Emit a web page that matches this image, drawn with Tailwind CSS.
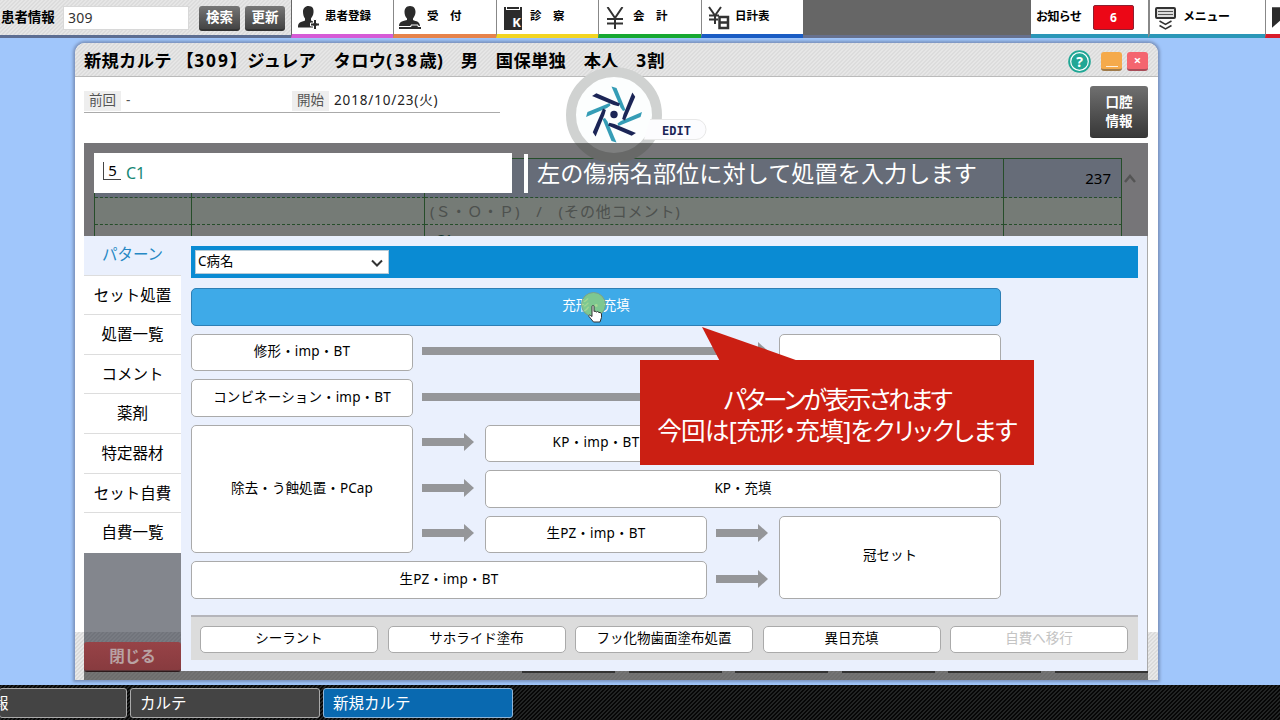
<!DOCTYPE html>
<html lang="ja">
<head>
  <meta charset="UTF-8" />
  <meta name="viewport" content="width=device-width, initial-scale=1.0"/>
  <title>新規カルテ</title>
  <script src="https://cdn.jsdelivr.net/npm/@tailwindcss/browser@4"></script>
</head>
<body class="w-[1280px] h-[720px] overflow-hidden relative flex flex-col bg-[#a0c6fb] text-black whitespace-nowrap font-['Noto_Sans','Noto_Sans_CJK_JP',sans-serif]">

  <!-- ヘッダー -->
  <header class="h-[38px] shrink-0 flex bg-[repeating-linear-gradient(135deg,#dcdcdc_0px,#dcdcdc_1.414px,#e6e6e6_1.414px,#e6e6e6_2.828px)]">
    <div class="w-[291px] h-full flex items-center border-b-3 border-[#5d6e92]">
      <span class="w-[63px] pl-px text-[13.5px] font-bold tracking-[-0.1px]">患者情報</span>
      <div class="w-[126px] h-6 px-1 bg-white border border-[#d8d8d8] text-[14px] leading-[21px] tracking-[0.3px] text-[#333]">309</div>
      <button class="ml-[10px] mt-px w-[41px] h-[25px] rounded-[3px] bg-linear-to-b from-[#777] to-[#444] border-b-2 border-[#333] text-white text-[13.5px] leading-5 font-bold">検索</button>
      <button class="ml-[5px] mt-px w-[40px] h-[25px] rounded-[3px] bg-linear-to-b from-[#777] to-[#444] border-b-2 border-[#333] text-white text-[13.5px] leading-5 font-bold">更新</button>
    </div>
    <div class="w-[102px] flex items-center bg-white border-l border-l-[#666] border-b-4 border-b-[#d65bd6] text-[11.5px] font-bold pb-0.5">
      <svg class="w-[22px] h-[24px] ml-[6px] mr-[5px] mt-1" viewBox="0 0 22 24" fill="#2b2b2b">
        <path d="M10.500 0c4 0 5.500 2.800 5 6.500-.2 3-1.500 4.500-2.500 6v2l2 1v6H0c0-4 1-5.500 6-6.500l1-.5v-2C5.500 10.500 5 8 5 5.500 5 2.500 7 0 10.500 0z"/>
        <path d="M15.500 13.500h3v3.500h3v3h-3v3.500h-3V20h-3v-3h3z" stroke="#fff" stroke-width="1"/>
      </svg>
      患者登録
    </div>
    <div class="w-[103px] flex items-center bg-white border-l border-l-[#888] border-b-4 border-b-[#e6834b] text-[11.5px] font-bold pb-0.5">
      <svg class="w-[22px] h-[24px] ml-[5px] mr-[6px] mt-1" viewBox="0 0 22 24" fill="#2b2b2b">
        <path d="M11 0c4 0 5.500 2.800 5.500 6 0 3-1.500 5-2.500 6.500v1.500l1 .5c4 1 6 2 6 6.500H0c0-4 1-5.500 6-6.500l2-.5v-1.500C6 10.500 5.500 8 5.500 6 5.500 3 7 0 11 0z"/>
        <path d="M0 20.500h12v-1.500h7v1.500h3V23H0z"/>
        <path d="M0 20.500h12v-1.500h7v1.500h3" fill="none" stroke="#fff"/>
      </svg>
      受　付
    </div>
    <div class="w-[102px] flex items-center bg-white border-l border-l-[#888] border-b-4 border-b-[#f3d521] text-[11.5px] font-bold pb-0.5">
      <div class="relative ml-[7px] mr-[8px] mt-1 w-[18px] h-[23px] bg-[#2b2b2b]">
        <div class="absolute left-0.5 top-0 w-[14px] h-[3px] bg-[#2b2b2b] border-x border-b border-white"></div>
        <span class="absolute right-px bottom-0 text-[13px] leading-[15px] text-white font-bold">K</span>
      </div>
      診　察
    </div>
    <div class="w-[103px] flex items-center bg-white border-l border-l-[#888] border-b-4 border-b-[#17a832] text-[11.5px] font-bold pb-0.5">
      <svg class="w-[18px] h-[22px] ml-[7px] mr-[9px] mt-1" viewBox="0 0 18 22" fill="none" stroke="#333" stroke-width="2">
        <path d="M1.500 0l7.500 11L16.500 0M9 11v11M1 12h16M1 16.500h16"/>
      </svg>
      会　計
    </div>
    <div class="w-[102px] flex items-center bg-white border-l border-l-[#888] border-b-4 border-b-[#1a5cc4] text-[11.5px] font-bold pb-0.5">
      <svg class="w-[22px] h-[24px] ml-[6px] mr-[5px] mt-1" viewBox="0 0 22 24" fill="none" stroke="#333" stroke-width="2">
        <path d="M1 1l6 8.500L13 1M7 9v9M1 9.500h10M1 13.500h9"/>
        <path d="M11.500 11h8.500v11h-8.500zM11.500 16.500h8.500" stroke-width="2.500"/>
      </svg>
      日計表
    </div>
    <div class="w-[228px] bg-[#666] border-b-3 border-[#66708e]"></div>
    <div class="w-[117px] flex items-center bg-white border-b-4 border-[#2b97b8] text-[12px] font-bold">
      <span class="w-[62px] pl-[5px] tracking-[-0.6px]">お知らせ</span>
      <span class="w-[41px] h-[25px] rounded-[2px] border border-[#8d2030] bg-[#ec0716] text-white text-center leading-[23px]">6</span>
    </div>
    <div class="w-[117px] flex items-center bg-white border-l-2 border-l-[#888] border-b-4 border-b-[#2b97b8] text-[12px] font-bold">
      <svg class="w-[21px] h-[23px] ml-[5px] mr-[7px] mt-0.5" viewBox="0 0 21 23" fill="none" stroke="#333">
        <rect x="1" y="1" width="19" height="10" rx="1" stroke-width="2" fill="#ddd"/>
        <path d="M3 4.500h15M3 7.500h15" stroke="#555"/>
        <path d="M4.500 14l6 3.500 6-3.500M4.500 18.500l6 3.500 6-3.500" stroke-width="1.500"/>
      </svg>
      <span class="tracking-[-0.3px]">メニュー</span>
    </div>
    <div class="w-[15px] flex bg-white border-l border-l-[#888] border-b-4 border-b-[#d81c2a]">
      <svg class="ml-[6px] mt-[6px] w-[9px] h-[24px]" viewBox="0 0 9 24"><path d="M0 0h9v15L0 23z" fill="#2b2b2b"/></svg>
    </div>
  </header>

  <!-- カルテウィンドウ -->
  <main class="relative ml-[75px] mt-[5px] w-[1083px] h-[637px] shrink-0 flex flex-col bg-white rounded-t-[10px] shadow-[0_0_3px_2px_#7b93bd]">
    <div class="h-[34px] shrink-0 flex items-center pl-[9px] pr-[10px] rounded-t-[10px] border-b border-[#bbb] bg-[repeating-linear-gradient(135deg,#dcdcdc_0px,#dcdcdc_1.414px,#e6e6e6_1.414px,#e6e6e6_2.828px)]">
      <h1 class="mt-0.5 text-[17.3px] font-bold tracking-[0.28px] flex-1 [text-spacing-trim:space-all]">新規カルテ 【<span class="tracking-[2px]">309</span>】ジュレア　タロウ<span class="tracking-[2.500px]">(38</span>歳)　男　国保単独　本人　<span class="tracking-[1px]">3</span>割</h1>
      <svg class="w-[23px] h-[23px] mt-[3px]" viewBox="0 0 23 23">
        <circle cx="11.500" cy="11.500" r="11.300" fill="#21a795"/>
        <circle cx="11.500" cy="11.500" r="8.800" fill="none" stroke="#fff" stroke-width="1.200"/>
        <text x="11.500" y="16.500" text-anchor="middle" font-size="14" font-weight="700" fill="#fff">?</text>
      </svg>
      <div class="ml-[10px] mt-[3px] w-[21px] h-[19px] rounded-[3px] bg-[#f5aa4b] border-b-2 border-[#a07b4a] flex justify-center items-end"><span class="w-3 h-px mb-0.5 bg-white/80"></span></div>
      <div class="ml-[5px] mt-[3px] w-[21px] h-[19px] rounded-[3px] bg-[#f4656f] border-b-2 border-[#a84c58] text-white text-[13px] leading-[17px] text-center font-bold">×</div>
    </div>

    <div class="h-[66px] shrink-0 flex justify-between pl-[9px] pr-[10px] pt-[9px]">
      <div class="mt-[5px] w-[416px] h-[22px] flex text-[13.5px] leading-[19px] border-b border-[#aaa]">
        <span class="w-[37px] h-5 text-center bg-[#eee] text-[#555]">前回</span>
        <span class="w-[171px] pl-[5px] text-[#555]">-</span>
        <span class="w-[37px] h-5 text-center bg-[#eee] text-[#555]">開始</span>
        <span class="pl-[5px] tracking-[0.85px] text-[#222]">2018/10/23(火)</span>
      </div>
      <button class="w-[58px] h-[52px] rounded-[3px] bg-linear-to-b from-[#707070] to-[#383838] border-b border-[#333] text-white text-[13.5px] leading-[19px] font-bold">口腔<br>情報</button>
    </div>

    <!-- 下端の斜線背景 -->
    <div class="absolute inset-x-0 bottom-0 h-12 bg-[repeating-linear-gradient(135deg,#dadada_0px,#dadada_1.414px,#e8e8e8_1.414px,#e8e8e8_2.828px)]"></div>

    <!-- カルテ表(暗転) -->
    <section class="relative mx-[9px] w-[1064px] h-[93px] shrink-0 overflow-hidden bg-[#ecebf0] pt-[15px] pl-[10px]">
      <div class="w-[1028px] grid grid-cols-[97px_233px_579px_118px] grid-rows-[39px_27px_27px] border-t border-l border-[#4c9a54] text-[15px] *:border-r *:border-b *:border-r-[#4c9a54] *:border-b-[#4c9a54] *:border-dashed *:[border-right-style:solid]">
        <div class="bg-[#ccd8f0]"></div>
        <div class="bg-[#ccd8f0]"></div>
        <div class="bg-[#ccd8f0]"></div>
        <div class="bg-[#ccd8f0] pr-[10px] text-right leading-[39px]">237</div>
        <div class="bg-[#ebf6ec]"></div>
        <div class="bg-[#ebf6ec]"></div>
        <div class="bg-[#ebf6ec] pl-[5px] leading-[27px] text-[#9aa29c] tracking-[0.9px]">(Ｓ・Ｏ・Ｐ)　/　(その他コメント)</div>
        <div class="bg-[#ebf6ec]"></div>
        <div class="bg-[#f0f3f0]"></div>
        <div class="bg-[#f0f3f0]"></div>
        <div class="bg-[#f0f3f0] pl-[10px] pt-[5px] leading-[18px] text-[#256b5c]">C1</div>
        <div class="bg-[#f0f3f0]"></div>
      </div>
      <svg class="absolute right-[12px] top-[30px] w-3 h-3" viewBox="0 0 12 12" fill="none" stroke="#a9a9a9" stroke-width="2.500"><path d="M1 9l5-6 5 6"/></svg>
    </section>

    <!-- ロゴ -->
    <div class="absolute left-[491px] top-[24px] w-[145px] h-[96px]">
      <svg class="w-[145px] h-[96px]" viewBox="0 0 145 96">
        <circle cx="48" cy="48" r="43" fill="#fcfefe" stroke="#d0d2d1" stroke-width="10"/>
        <path d="M84 52.500h46a10 10 0 010 20H78z" fill="#fcfcfe"/>
        <path d="M84 52.500h46a10 10 0 010 20H78" fill="none" stroke="#e8e8e8"/>
        <g transform="translate(48 47.500)">
          <circle r="3.700" fill="#1b2556"/>
          <g fill="#359db6">
            <path d="M-2.500-28l5 1.500L11.500-4.500 9-3.500 6.500-7z"/>
            <path d="M-2.500-28l5 1.500L11.500-4.500 9-3.500 6.500-7z" transform="rotate(90)"/>
            <path d="M-2.500-28l5 1.500L11.500-4.500 9-3.500 6.500-7z" transform="rotate(180)"/>
            <path d="M-2.500-28l5 1.500L11.500-4.500 9-3.500 6.500-7z" transform="rotate(270)"/>
          </g>
          <g fill="#1b2556">
            <path d="M-2.500-28.500l5 1L12-3.500 9-2.500 6.500-7z" transform="rotate(45)"/>
            <path d="M-2.500-28.500l5 1L12-3.500 9-2.500 6.500-7z" transform="rotate(135)"/>
            <path d="M-2.500-28.500l5 1L12-3.500 9-2.500 6.500-7z" transform="rotate(225)"/>
            <path d="M-2.500-28.500l5 1L12-3.500 9-2.500 6.500-7z" transform="rotate(315)"/>
          </g>
        </g>
      </svg>
      <span class="absolute left-[96px] top-[56px] text-[12px] leading-4 font-bold text-[#1b2556] font-['DejaVu_Sans_Mono',monospace]">EDIT</span>
    </div>
    <div class="absolute left-[9px] top-[100px] w-[1064px] h-[93px] bg-black/50">
      <div class="mt-[10px] ml-[10px] h-10 flex">
        <div class="w-[418px] bg-white flex pl-[9px] pt-[9px]">
          <span class="w-[18px] h-[18px] border-l border-b border-[#444] text-center text-[15px] leading-[17px]">5</span>
          <span class="ml-[5px] text-[16px] leading-[22px] text-[#158775]">C1</span>
        </div>
        <div class="ml-3 mt-px w-1 h-[39px] bg-white"></div>
        <p class="ml-[9px] text-[23.2px] leading-[40px] text-white">左の傷病名部位に対して処置を入力します</p>
      </div>
    </div>

    <div class="relative mx-[9px] w-[1064px] h-[435px] flex">
      <!-- サイドメニュー -->
      <nav class="w-[97px] flex flex-col bg-[#080e1c]/50 text-[15.5px] text-center">
        <div class="h-[39.600px] leading-[37px] bg-[#eaf0fd] text-[#2688c4] border-b border-[#ddd]">パターン</div>
        <div class="h-[39.600px] leading-[38px] bg-white border-b border-[#ddd]">セット処置</div>
        <div class="h-[39.600px] leading-[38px] bg-white border-b border-[#ddd]">処置一覧</div>
        <div class="h-[39.600px] leading-[38px] bg-white border-b border-[#ddd]">コメント</div>
        <div class="h-[39.600px] leading-[38px] bg-white border-b border-[#ddd]">薬剤</div>
        <div class="h-[39.600px] leading-[38px] bg-white border-b border-[#ddd]">特定器材</div>
        <div class="h-[39.600px] leading-[38px] bg-white border-b border-[#ddd]">セット自費</div>
        <div class="h-[39.600px] leading-[38px] bg-white">自費一覧</div>
        <button class="mt-auto -mb-px w-[97px] h-[30px] rounded-[3px] bg-linear-to-b from-[#974347] to-[#883b3f] border-b-2 border-[#5b3438] text-[#b9a3a4] text-[15.5px] leading-7 font-bold">閉じる</button>
      </nav>

      <!-- パターン -->
      <section class="flex-1 flex flex-col bg-[#eaf0fd] pt-[10px] pl-[10px] pr-[9px] border-r border-[#aaa]">
        <div class="h-8 shrink-0 bg-[#0a8bd3] p-1">
          <div class="w-[194px] h-6 bg-white border border-[#b7cbd8] flex items-center justify-between pl-[2px] pr-[5px] pb-0.5 text-[13.5px]">
            C病名
            <svg class="w-3 h-2 mt-1" viewBox="0 0 12 8" fill="none" stroke="#333" stroke-width="2"><path d="M1 1.500l5 5 5-5"/></svg>
          </div>
        </div>

        <div class="mt-[10px] grid grid-cols-[222px_72px_222px_72px_222px] grid-rows-[repeat(7,37.500px)] gap-y-2 text-[13.5px]">
          <div class="col-span-5 flex items-center justify-center pb-1 rounded-[5px] border border-[#2e7fb5] bg-[#3eaae8] text-white">充形・充填</div>

          <div class="flex items-center justify-center pb-0.5 rounded-[5px] border border-[#aaa] bg-white tracking-[0.2px]">修形・imp・BT</div>
          <div class="col-span-3 flex items-center pl-[9px] pr-[11px] pb-0.5">
            <div class="flex-1 h-2 bg-[#959699]"></div>
            <svg class="w-[10px] h-[18px]" viewBox="0 0 10 18" fill="#959699"><path d="M0 0l10 9-10 9z"/></svg>
          </div>
          <div class="rounded-[5px] border border-[#aaa] bg-white"></div>

          <div class="flex items-center justify-center pb-0.5 rounded-[5px] border border-[#aaa] bg-white tracking-[0.15px]">コンビネーション・imp・BT</div>
          <div class="col-span-3 flex items-center pl-[9px] pr-[11px] pb-0.5">
            <div class="flex-1 h-2 bg-[#959699]"></div>
            <svg class="w-[10px] h-[18px]" viewBox="0 0 10 18" fill="#959699"><path d="M0 0l10 9-10 9z"/></svg>
          </div>
          <div class="rounded-[5px] border border-[#aaa] bg-white"></div>

          <div class="row-span-3 flex items-center justify-center pb-0.5 rounded-[5px] border border-[#aaa] bg-white tracking-[0.1px]">除去・う蝕処置・PCap</div>
          <div class="flex items-center pl-[9px] pr-[11px] pb-0.5">
            <div class="flex-1 h-2 bg-[#959699]"></div>
            <svg class="w-[10px] h-[18px]" viewBox="0 0 10 18" fill="#959699"><path d="M0 0l10 9-10 9z"/></svg>
          </div>
          <div class="flex items-center justify-center pb-0.5 rounded-[5px] border border-[#aaa] bg-white tracking-[0.3px]">KP・imp・BT</div>
          <div class="col-span-2"></div>

          <div class="flex items-center pl-[9px] pr-[11px] pb-0.5">
            <div class="flex-1 h-2 bg-[#959699]"></div>
            <svg class="w-[10px] h-[18px]" viewBox="0 0 10 18" fill="#959699"><path d="M0 0l10 9-10 9z"/></svg>
          </div>
          <div class="col-span-3 flex items-center justify-center pb-0.5 rounded-[5px] border border-[#aaa] bg-white">KP・充填</div>

          <div class="flex items-center pl-[9px] pr-[11px] pb-0.5">
            <div class="flex-1 h-2 bg-[#959699]"></div>
            <svg class="w-[10px] h-[18px]" viewBox="0 0 10 18" fill="#959699"><path d="M0 0l10 9-10 9z"/></svg>
          </div>
          <div class="flex items-center justify-center pb-0.5 rounded-[5px] border border-[#aaa] bg-white tracking-[0.2px]">生PZ・imp・BT</div>
          <div class="flex items-center pl-[9px] pr-[11px] pb-0.5">
            <div class="flex-1 h-2 bg-[#959699]"></div>
            <svg class="w-[10px] h-[18px]" viewBox="0 0 10 18" fill="#959699"><path d="M0 0l10 9-10 9z"/></svg>
          </div>
          <div class="row-span-2 flex items-center justify-center pb-1 rounded-[5px] border border-[#aaa] bg-white">冠セット</div>

          <div class="col-span-3 flex items-center justify-center pb-0.5 rounded-[5px] border border-[#aaa] bg-white tracking-[0.2px]">生PZ・imp・BT</div>
          <div class="flex items-center pl-[9px] pr-[11px] pb-0.5">
            <div class="flex-1 h-2 bg-[#959699]"></div>
            <svg class="w-[10px] h-[18px]" viewBox="0 0 10 18" fill="#959699"><path d="M0 0l10 9-10 9z"/></svg>
          </div>
        </div>

        <div class="mt-4 h-[45px] flex items-start gap-[9.500px] pl-[9px] pr-[10px] pt-[9px] bg-[#dcdcdc] border-t-2 border-[#b5b5ba] text-[13.5px] leading-[22px] text-center">
          <button class="flex-1 h-[27px] pb-0.5 rounded-[5px] border border-[#aaa] bg-white">シーラント</button>
          <button class="flex-1 h-[27px] pb-0.5 rounded-[5px] border border-[#aaa] bg-white">サホライド塗布</button>
          <button class="flex-1 h-[27px] pb-0.5 rounded-[5px] border border-[#aaa] bg-white">フッ化物歯面塗布処置</button>
          <button class="flex-1 h-[27px] pb-0.5 rounded-[5px] border border-[#aaa] bg-white">異日充填</button>
          <button class="flex-1 h-[27px] pb-0.5 rounded-[5px] border border-[#aaa] bg-white text-[#c4c4c4]">自費へ移行</button>
        </div>
      </section>
    </div>
    <div class="relative mx-[9px] w-[1064px] h-[9px] bg-black/50 flex justify-end gap-[13.600px]">
      <div class="w-[93px] h-0.5 bg-[#333]"></div>
      <div class="w-[93px] h-0.5 bg-[#333]"></div>
      <div class="w-[93px] h-0.5 bg-[#333]"></div>
      <div class="w-[93px] h-0.5 bg-[#333]"></div>
      <div class="w-[93px] h-0.5 bg-[#333]"></div>
      <div class="w-[93px] h-0.5 bg-[#333]"></div>
    </div>
  </main>

  <!-- タスクバー -->
  <footer class="relative mt-[5px] h-[35px] shrink-0 flex gap-[3px] pt-[3px] bg-[repeating-linear-gradient(135deg,#060606_0px,#060606_1.414px,#222424_1.414px,#222424_2.828px)] text-white text-[15.5px] leading-[29px]">
    <div class="w-[128px] h-[30px] -ml-px rounded-[3px] border border-[#aaa] bg-[#444] overflow-hidden"><span class="-ml-[7px]">報</span></div>
    <div class="w-[190px] h-[30px] pl-[9px] rounded-[3px] border border-[#aaa] bg-[#444]">カルテ</div>
    <div class="w-[190px] h-[30px] pl-[9px] rounded-[3px] border border-[#8fb5d8] bg-[#0969b0]">新規カルテ</div>
  </footer>

  <!-- 吹き出し -->
  <svg class="absolute left-[700px] top-[326px] w-[100px] h-[36px]" viewBox="0 0 100 36"><path d="M2 1l98 34.500H20z" fill="#cb1f13"/></svg>
  <div class="absolute left-[640px] top-[360px] w-[394px] h-[105px] pt-6 bg-[#cb1f13] text-white text-center text-[24.500px] leading-[31px] [font-feature-settings:'palt']">
    <p class="tracking-[-2.400px]">パターンが表示されます</p>
    <p class="tracking-[-0.650px]">今回は[充形・充填]をクリックします</p>
  </div>

  <!-- カーソル -->
  <div class="absolute left-[581px] top-[292px] w-[25px] h-[25px] rounded-full border border-[#77a08c] bg-[#8fd079]/80"></div>
  <svg class="absolute left-[588px] top-[305px] w-[15px] h-[18px]" viewBox="0 0 15 18" fill="#fff" stroke="#333" stroke-width="1">
    <path d="M4 1.500c0-1.300 2-1.300 2 0v5l1-.5 1.500 1 1-.5 1.500 1 1.500 0 1 1.500v3.500L12 17H5.500L1 11.500c-.8-1.200.5-2 1.500-1L4 11.500z"/>
  </svg>
</body>
</html>
